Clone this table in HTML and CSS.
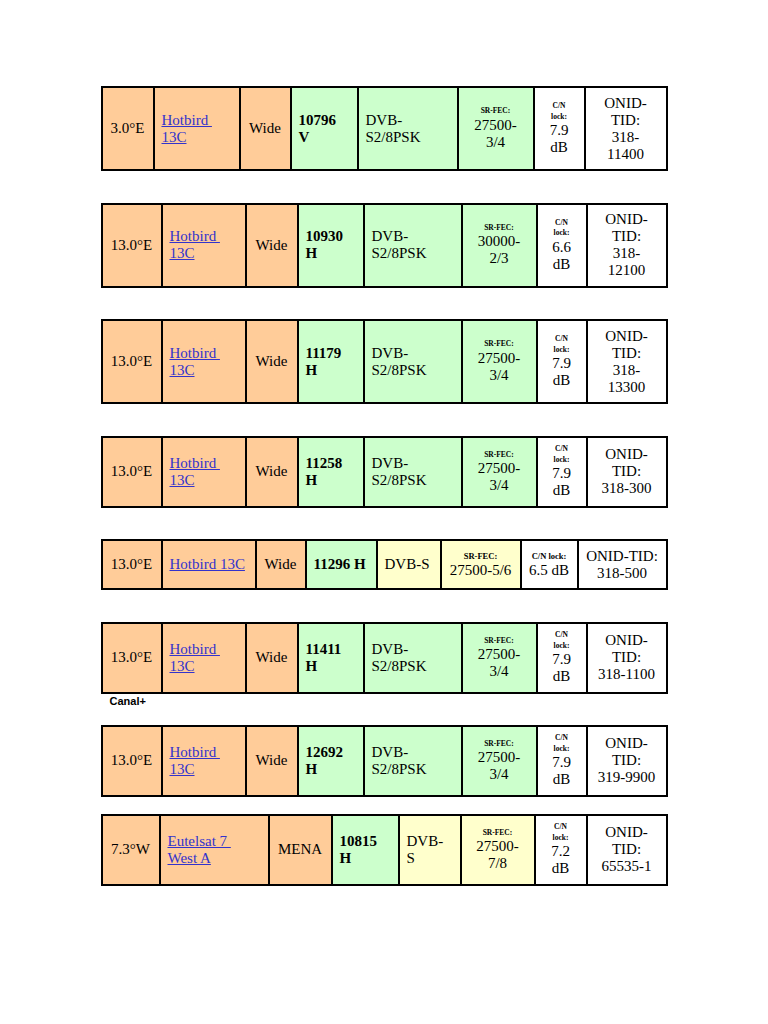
FILE: index.html
```html
<!DOCTYPE html>
<html lang="en">
<head>
<meta charset="utf-8">
<title>Transponder list</title>
<link rel="stylesheet" href="styles.css">
</head>
<body>
<div class="sheet">

  <table class="sat t-a">
    <tr>
      <td class="pos peach">3.0°E</td>
      <td class="name peach"><a href="#">Hotbird&nbsp;<br>13C</a></td>
      <td class="beam peach">Wide</td>
      <td class="freq green">10796<br>V</td>
      <td class="sys green">DVB-<br>S2/8PSK</td>
      <td class="fec green"><span class="tiny">SR-FEC:</span>27500-<br>3/4</td>
      <td class="cn"><span class="tiny">C/N<br>lock:</span>7.9<br>dB</td>
      <td class="onid">ONID-<br>TID:<br>318-<br>11400</td>
    </tr>
  </table>

  <table class="sat t-b">
    <tr>
      <td class="pos peach">13.0°E</td>
      <td class="name peach"><a href="#">Hotbird&nbsp;<br>13C</a></td>
      <td class="beam peach">Wide</td>
      <td class="freq green">10930<br>H</td>
      <td class="sys green">DVB-<br>S2/8PSK</td>
      <td class="fec green"><span class="tiny">SR-FEC:</span>30000-<br>2/3</td>
      <td class="cn"><span class="tiny">C/N<br>lock:</span>6.6<br>dB</td>
      <td class="onid">ONID-<br>TID:<br>318-<br>12100</td>
    </tr>
  </table>

  <table class="sat t-b">
    <tr>
      <td class="pos peach">13.0°E</td>
      <td class="name peach"><a href="#">Hotbird&nbsp;<br>13C</a></td>
      <td class="beam peach">Wide</td>
      <td class="freq green">11179<br>H</td>
      <td class="sys green">DVB-<br>S2/8PSK</td>
      <td class="fec green"><span class="tiny">SR-FEC:</span>27500-<br>3/4</td>
      <td class="cn"><span class="tiny">C/N<br>lock:</span>7.9<br>dB</td>
      <td class="onid">ONID-<br>TID:<br>318-<br>13300</td>
    </tr>
  </table>

  <table class="sat t-b">
    <tr>
      <td class="pos peach">13.0°E</td>
      <td class="name peach"><a href="#">Hotbird&nbsp;<br>13C</a></td>
      <td class="beam peach">Wide</td>
      <td class="freq green">11258<br>H</td>
      <td class="sys green">DVB-<br>S2/8PSK</td>
      <td class="fec green"><span class="tiny">SR-FEC:</span>27500-<br>3/4</td>
      <td class="cn"><span class="tiny">C/N<br>lock:</span>7.9<br>dB</td>
      <td class="onid">ONID-<br>TID:<br>318-300</td>
    </tr>
  </table>

  <table class="sat t-c">
    <tr>
      <td class="pos peach">13.0°E</td>
      <td class="name peach"><a href="#">Hotbird 13C</a></td>
      <td class="beam peach">Wide</td>
      <td class="freq green">11296 H</td>
      <td class="sys yellow">DVB-S</td>
      <td class="fec yellow"><span class="tiny">SR-FEC:</span>27500-5/6</td>
      <td class="cn"><span class="tiny">C/N lock:</span>6.5 dB</td>
      <td class="onid">ONID-TID:<br>318-500</td>
    </tr>
  </table>

  <table class="sat t-b noted">
    <tr>
      <td class="pos peach">13.0°E</td>
      <td class="name peach"><a href="#">Hotbird&nbsp;<br>13C</a></td>
      <td class="beam peach">Wide</td>
      <td class="freq green">11411<br>H</td>
      <td class="sys green">DVB-<br>S2/8PSK</td>
      <td class="fec green"><span class="tiny">SR-FEC:</span>27500-<br>3/4</td>
      <td class="cn"><span class="tiny">C/N<br>lock:</span>7.9<br>dB</td>
      <td class="onid">ONID-<br>TID:<br>318-1100</td>
    </tr>
  </table>
  <p class="note">Canal+</p>

  <table class="sat t-b tight">
    <tr>
      <td class="pos peach">13.0°E</td>
      <td class="name peach"><a href="#">Hotbird&nbsp;<br>13C</a></td>
      <td class="beam peach">Wide</td>
      <td class="freq green">12692<br>H</td>
      <td class="sys green">DVB-<br>S2/8PSK</td>
      <td class="fec green"><span class="tiny">SR-FEC:</span>27500-<br>3/4</td>
      <td class="cn"><span class="tiny">C/N<br>lock:</span>7.9<br>dB</td>
      <td class="onid">ONID-<br>TID:<br>319-9900</td>
    </tr>
  </table>

  <table class="sat t-d">
    <tr>
      <td class="pos peach">7.3°W</td>
      <td class="name peach"><a href="#">Eutelsat 7&nbsp;<br>West A</a></td>
      <td class="beam peach">MENA</td>
      <td class="freq green">10815<br>H</td>
      <td class="sys yellow">DVB-<br>S</td>
      <td class="fec yellow"><span class="tiny">SR-FEC:</span>27500-<br>7/8</td>
      <td class="cn"><span class="tiny">C/N<br>lock:</span>7.2<br>dB</td>
      <td class="onid">ONID-<br>TID:<br>65535-1</td>
    </tr>
  </table>

</div>
</body>
</html>
```

FILE: styles.css
```css
html, body {
  margin: 0;
  padding: 0;
  background: #ffffff;
}

body {
  font-family: "Liberation Serif", "Times New Roman", serif;
  color: #000000;
}

.sheet {
  width: 567px;
  margin: 0 auto;
  padding-top: 86px;
  display: flex;
  flex-direction: column;
}

.sat {
  width: 567px;
  table-layout: fixed;
  border-collapse: separate;
  border-spacing: 0;
  border: 1px solid #000000;
  margin: 0 0 31.6px 0;
  font-size: 15px;
  line-height: 17px;
}

.sat.noted {
  margin-bottom: 0;
}

.sat.tight {
  margin-bottom: 17px;
}

.sat td {
  box-sizing: border-box;
  border: 1px solid #000000;
  padding: 6.5px 7px;
  vertical-align: middle;
  white-space: nowrap;
  background: #ffffff;
}

.sat td.peach { background: #ffcc99; }
.sat td.green { background: #ccffcc; }
.sat td.yellow { background: #ffffcc; }

.pos, .beam, .fec, .cn, .onid {
  text-align: center;
}

.name, .freq, .sys {
  text-align: left;
}

.freq {
  font-weight: bold;
}

.name a {
  color: #3333cc;
  text-decoration: underline;
}

.tiny {
  display: block;
  font-size: 7.5px;
  line-height: 10.5px;
  font-weight: bold;
}

.t-c .tiny {
  font-size: 8.5px;
  line-height: 11px;
}

/* column widths: table 1 */
.t-a .pos { width: 52px; }
.t-a .name { width: 86px; }
.t-a .beam { width: 51px; }
.t-a .freq { width: 67px; }
.t-a .sys { width: 100px; }
.t-a .fec { width: 76px; }
.t-a .cn { width: 51px; }
.t-a .onid { width: 82px; }

/* column widths: Hotbird rows */
.t-b .pos { width: 60px; }
.t-b .name { width: 84px; }
.t-b .beam { width: 52px; }
.t-b .freq { width: 66px; }
.t-b .sys { width: 98px; }
.t-b .fec { width: 75px; }
.t-b .cn { width: 50px; }
.t-b .onid { width: 80px; }

/* column widths: single-line row */
.t-c .pos { width: 60px; }
.t-c .name { width: 94px; }
.t-c .beam { width: 50px; }
.t-c .freq { width: 71px; }
.t-c .sys { width: 64px; }
.t-c .fec { width: 80px; }
.t-c .cn { width: 57px; }
.t-c .onid { width: 89px; }

/* column widths: Eutelsat row */
.t-d .pos { width: 58px; }
.t-d .name { width: 109px; }
.t-d .beam { width: 63px; }
.t-d .freq { width: 67px; }
.t-d .sys { width: 62px; }
.t-d .fec { width: 74px; }
.t-d .cn { width: 52px; }
.t-d .onid { width: 80px; }

.note {
  margin: 0 0 17px 0;
  padding-left: 9px;
  font-family: "Liberation Sans", Arial, sans-serif;
  font-weight: bold;
  font-size: 11px;
  line-height: 14px;
}
```
